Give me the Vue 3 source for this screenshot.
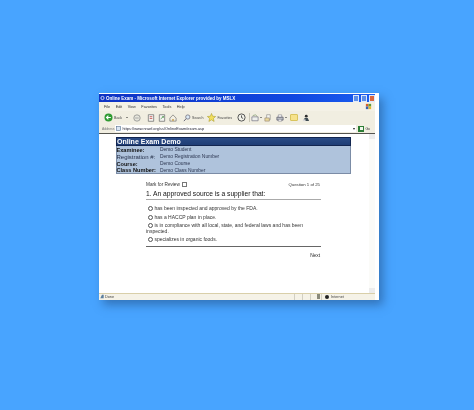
<template>
  <div class="page">
    <div class="window">
      <div class="titlebar">
        <svg class="ie" viewBox="0 0 8 8"><circle cx="4" cy="4" r="2.6" fill="none" stroke="#fff" stroke-width="1.2" /></svg>
        <span class="title">Online Exam - Microsoft Internet Explorer provided by MSLX</span>
        <div class="winbtns">
          <span class="winbtn"></span>
          <span class="winbtn"></span>
          <span class="winbtn close"></span>
        </div>
      </div>

      <div class="menubar">
        <span v-for="m in menus" :key="m">{{ m }}</span>
        <svg class="flag" viewBox="0 0 8 8">
          <rect x="1" y="1" width="3" height="3" fill="#d8612a" />
          <rect x="4" y="1" width="3" height="3" fill="#5a9a3a" />
          <rect x="1" y="4" width="3" height="3" fill="#3a62b0" />
          <rect x="4" y="4" width="3" height="3" fill="#e2b82e" />
        </svg>
      </div>

      <div class="toolbar">
        <svg class="tool wide" viewBox="0 0 9 9">
          <circle cx="4.5" cy="4.5" r="4" fill="#2f9a32" />
          <path d="M6.8 4.5H2.6M4.4 2.6 2.5 4.5l1.9 1.9" fill="none" stroke="#fff" stroke-width="1.1" />
        </svg>
        <span class="tool-text">Back</span>
        <span class="caret"></span>
        <svg class="tool fwd" viewBox="0 0 9 9">
          <circle cx="4.5" cy="4.5" r="3.6" fill="#e6e6dc" stroke="#777" stroke-width=".7" />
          <path d="M2.4 4.5h4" stroke="#999" stroke-width=".9" />
        </svg>
        <svg class="tool doc first" viewBox="0 0 9 9">
          <path d="M1.5 .8h6v7.4h-6z" fill="#f4f4f0" stroke="#555" stroke-width=".7" />
          <path d="M3 3h3M3 5h3" stroke="#b33" stroke-width=".8" />
        </svg>
        <svg class="tool doc" viewBox="0 0 9 9">
          <path d="M1.5 .8h6v7.4h-6z" fill="#f4f4f0" stroke="#555" stroke-width=".7" />
          <path d="M3 5.5 6 3M4.8 2.8H6.2V4.2" fill="none" stroke="#3a8a3a" stroke-width=".8" />
        </svg>
        <svg class="tool doc" viewBox="0 0 9 9">
          <path d="M1 4.6 4.5 1 8 4.6V8H1z" fill="#f3efe2" stroke="#666" stroke-width=".7" />
          <path d="M3.6 8V5.6h1.8V8" fill="#c9a45a" />
        </svg>
        <svg class="tool search" viewBox="0 0 9 9">
          <circle cx="5.4" cy="3.4" r="2.4" fill="#dbe9f5" stroke="#667" stroke-width=".8" />
          <path d="M3.6 5.2 1 8" stroke="#667" stroke-width="1.1" />
        </svg>
        <span class="tool-text">Search</span>
        <svg class="tool star" viewBox="0 0 10 10">
          <path d="M5 .5 6.3 3.6 9.6 3.9 7.1 6.1 7.9 9.4 5 7.6 2.1 9.4 2.9 6.1.4 3.9 3.7 3.6z" fill="#f3df5c" stroke="#a89a28" stroke-width=".6" />
        </svg>
        <span class="tool-text">Favorites</span>
        <svg class="tool hist" viewBox="0 0 9 9">
          <circle cx="4.5" cy="4.5" r="3.6" fill="#f2f2ea" stroke="#444" stroke-width=".9" />
          <path d="M4.5 2.4v2.2l1.6.8" fill="none" stroke="#333" stroke-width=".8" />
        </svg>
        <span class="sep"></span>
        <svg class="tool" viewBox="0 0 9 9">
          <path d="M1 3.2h7v4.4H1z" fill="#eef0ec" stroke="#667" stroke-width=".7" />
          <path d="M2 1.8 5 1l2 1.6" fill="none" stroke="#6a8a5a" stroke-width=".7" />
        </svg>
        <span class="caret small"></span>
        <svg class="tool mail" viewBox="0 0 9 9">
          <path d="M3 .8h4v5.6H3z" fill="#f6f6f0" stroke="#777" stroke-width=".6" />
          <path d="M1 4.4h5V8H1z" fill="#e9d99c" stroke="#876" stroke-width=".6" />
        </svg>
        <svg class="tool print" viewBox="0 0 9 9">
          <path d="M1 3.5h7v3.4H1z" fill="#bfc3c8" stroke="#445" stroke-width=".7" />
          <path d="M2.6 1h3.8v2.4H2.6zM2.6 6h3.8v2H2.6z" fill="#fff" stroke="#556" stroke-width=".5" />
        </svg>
        <span class="caret small"></span>
        <span class="note"></span>
        <svg class="tool msg" viewBox="0 0 9 9">
          <circle cx="4.8" cy="2.4" r="1.6" fill="#2e2e2e" />
          <path d="M1.2 8 3 4.6h3.4L8 8z" fill="#3d4a52" />
          <rect x="1" y="6" width="3" height="2" fill="#d9d9d9" />
        </svg>
      </div>

      <div class="addressbar">
        <span class="addr-label">Address</span>
        <div class="addr-field">
          <svg class="page-icon" viewBox="0 0 6 6">
            <rect x=".5" y=".5" width="5" height="5" fill="#dbe6f2" stroke="#56708f" stroke-width=".7" />
          </svg>
          <span class="url">https://www.nraef.org/ss/OnlineExam/exam.asp</span>
          <span class="addr-arrow"></span>
        </div>
        <span class="go-icon"><i></i></span>
        <span class="go-text">Go</span>
      </div>

      <div class="content">
        <div class="doc-body">
          <div class="exam-box">
            <div class="exam-title">Online Exam Demo</div>
            <div class="exam-info">
              <template v-for="r in examRows" :key="r.label">
                <span class="info-label" :class="{ thin: r.thin }">{{ r.label }}</span>
                <span class="info-value">{{ r.value }}</span>
              </template>
            </div>
          </div>

          <div class="question">
            <div class="q-head">
              <span class="mark">Mark for Review <i class="checkbox"></i></span>
              <span class="q-count">Question 1 of 25</span>
            </div>
            <div class="q-text">1. An approved source is a supplier that:</div>
            <div class="rule light"></div>
            <div class="answers">
              <div v-for="a in answers" :key="a" class="answer"><i class="radio"></i>{{ a }}</div>
            </div>
            <div class="rule dark"></div>
            <div class="next">Next</div>
          </div>
        </div>
        <div class="scrollbar">
          <span class="sb-btn"></span>
          <span class="sb-btn"></span>
        </div>
      </div>

      <div class="statusbar">
        <svg class="status-icon" viewBox="0 0 6 6">
          <path d="M.5 5.5 3 .5h2.5v5z" fill="#5d7f9e" />
        </svg>
        <span class="status-done">Done</span>
        <span class="pane"></span>
        <span class="pane"></span>
        <span class="pane lock"><i></i></span>
        <span class="pane zone"><i class="globe"></i>Internet</span>
      </div>
    </div>
  </div>
</template>

<script setup>
const menus = ['File', 'Edit', 'View', 'Favorites', 'Tools', 'Help']

const examRows = [
  { label: 'Examinee:', value: 'Demo Student' },
  { label: 'Registration #:', value: 'Demo Registration Number', thin: true },
  { label: 'Course:', value: 'Demo Course' },
  { label: 'Class Number:', value: 'Demo Class Number' }
]

const answers = [
  'has been inspected and approved by the FDA.',
  'has a HACCP plan in place.',
  'is in compliance with all local, state, and federal laws and has been inspected.',
  'specializes in organic foods.'
]
</script>

<style scoped>
.page {
  width: 474px;
  height: 410px;
  box-sizing: border-box;
  padding: 92.5px 0 0 99px;
  background: #48a4ff;
  font-family: "Liberation Sans", Arial, sans-serif;
  overflow: hidden;
}
.window {
  width: 280px;
  height: 207.5px;
  box-sizing: border-box;
  padding: 1.5px 4px 0 0;
  display: flex;
  flex-direction: column;
  background: #fff;
  box-shadow: 4px 5px 9px rgba(30, 70, 120, 0.5);
  filter: blur(0.45px);
}
.titlebar {
  height: 8px;
  display: flex;
  align-items: center;
  gap: 1px;
  padding: 0 0 0 1px;
  background: linear-gradient(90deg, #0f33c4, #1147e0 70%, #1a5ef0);
  color: #fff;
  font-size: 4.5px;
  font-weight: 700;
}
.ie { width: 5px; height: 6px; flex: none; }
.title { flex: 1; white-space: nowrap; }
.winbtns { display: flex; gap: 1.5px; }
.winbtn {
  width: 6.5px;
  height: 7px;
  background: #5d8fe8;
  border: 0.5px solid #dfe9fb;
  box-sizing: border-box;
}
.winbtn.close { background: #d9683f; }
.menubar {
  height: 9px;
  display: flex;
  align-items: center;
  gap: 5.5px;
  padding-left: 5px;
  font-size: 3.8px;
  color: #333;
  background: #f4f1e6;
}
.flag { width: 7px; height: 7px; margin-left: auto; margin-right: 3px; }
.toolbar {
  height: 13px;
  display: flex;
  align-items: center;
  padding-left: 5px;
  color: #444;
  font-size: 3.6px;
  background: #f1eee1;
}
.tool { width: 8px; height: 8px; flex: none; }
.tool.wide { width: 9px; height: 9px; }
.tool-text { margin-left: 1px; white-space: nowrap; }
.caret {
  width: 0;
  height: 0;
  margin: 0 5px 0 4px;
  border: 1.2px solid transparent;
  border-top: 1.6px solid #222;
  border-bottom: 0;
}
.caret.small { margin: 0 2px 0 1px; }
.fwd { margin-right: 4px; }
.doc { margin-left: 3px; }
.first { margin-left: 2px; }
.search { margin-left: 6px; }
.star { width: 9px; height: 9px; margin-left: 4px; }
.hist { margin-left: 5px; width: 9px; height: 9px; }
.sep { width: 0.5px; height: 9px; margin: 0 1.5px 0 3px; background: #c9c6b6; }
.mail { margin-left: 0; }
.print { margin-left: 4px; }
.note {
  width: 8px;
  height: 7px;
  border-radius: 1px;
  background: #f6e28b;
  border: 0.5px solid #d9c45e;
  box-sizing: border-box;
  margin-left: 1px;
}
.msg { margin-left: 4px; }
.addressbar {
  height: 9px;
  display: flex;
  align-items: center;
  padding: 0 5px 0 3px;
  font-size: 3.4px;
  color: #777;
  background: #f1eee1;
}
.addr-field {
  flex: 1;
  height: 7px;
  margin-left: 1px;
  display: flex;
  align-items: center;
  gap: 1px;
  padding-left: 1px;
  background: #fff;
}
.page-icon { width: 5px; height: 5px; }
.url { flex: 1; color: #223; font-size: 3.9px; white-space: nowrap; }
.addr-arrow {
  width: 0;
  height: 0;
  margin-right: 1px;
  border: 1.5px solid transparent;
  border-top: 2px solid #222;
  border-bottom: 0;
}
.go-icon {
  width: 6px;
  height: 6px;
  margin-left: 2px;
  background: #2c7d35;
  display: flex;
  align-items: center;
  justify-content: center;
}
.go-icon i { width: 3px; height: 3px; background: #eef6ea; }
.go-text { margin-left: 1px; color: #333; }
.content {
  flex: 1;
  display: flex;
  min-height: 0;
  border-top: 1px solid #55554f;
  background: #fff;
}
.doc-body { flex: 1; padding: 3px 0 0 16.5px; }
.exam-box { width: 235px; }
.exam-title {
  height: 9px;
  box-sizing: border-box;
  padding-left: 0.5px;
  border: 0.5px solid #12254f;
  background: linear-gradient(#2a4b86, #1f3d75);
  color: #fff;
  font-size: 7px;
  font-weight: 700;
  line-height: 8px;
}
.exam-info {
  display: grid;
  grid-template-columns: 43.5px 1fr;
  grid-auto-rows: 6.8px;
  align-items: center;
  height: 28px;
  box-sizing: border-box;
  padding-top: 0.6px;
  background: #afc3dc;
  border: 0.5px solid #7b8ca6;
  border-top: 0;
}
.info-label {
  color: #111;
  font-size: 5.6px;
  font-weight: 700;
  white-space: nowrap;
}
.info-label.thin { font-size: 6px; font-weight: 400; color: #27314a; }
.info-value { color: #2c3650; font-size: 4.9px; white-space: nowrap; }
.question { width: 175px; margin: 7px 0 0 30.5px; }
.q-head {
  display: flex;
  justify-content: space-between;
  align-items: center;
  height: 7px;
  font-size: 4.7px;
  color: #333;
  padding-right: 1px;
}
.q-count { font-size: 4.3px; }
.mark { display: flex; align-items: center; gap: 2px; }
.checkbox {
  width: 5px;
  height: 5px;
  box-sizing: border-box;
  border: 0.5px solid #777;
}
.q-text {
  margin-top: 2px;
  height: 7px;
  line-height: 7px;
  font-size: 6.7px;
  color: #111;
  white-space: nowrap;
}
.rule { margin-top: 2px; height: 0.6px; background: #aaa; }
.rule.dark { margin-top: 3.5px; height: 0.8px; background: #666; }
.answers { padding-top: 6.5px; }
.answer {
  font-size: 5px;
  line-height: 5.6px;
  color: #333;
  margin-bottom: 2.9px;
}
.radio {
  display: inline-block;
  width: 5px;
  height: 5px;
  box-sizing: border-box;
  margin: 0 1.5px 0 2px;
  border: 0.6px solid #555;
  border-radius: 50%;
  vertical-align: middle;
}
.next {
  margin-top: 6px;
  text-align: right;
  font-size: 4.8px;
  color: #222;
  padding-right: 1px;
}
.scrollbar {
  width: 6px;
  display: flex;
  flex-direction: column;
  justify-content: space-between;
  background: #fbfbf8;
}
.sb-btn { height: 5px; background: #ececec; }
.statusbar {
  height: 6.5px;
  display: flex;
  align-items: center;
  border-top: 1px solid #d9cfa9;
  font-size: 3.8px;
  color: #444;
  background: #f5f2e7;
}
.status-icon { width: 4px; height: 5px; margin-left: 1px; }
.status-done { margin-left: 1px; flex: 1; }
.pane {
  width: 8px;
  height: 100%;
  border-left: 0.5px solid #d2cfc2;
  box-sizing: border-box;
}
.pane.lock { width: 11px; display: flex; align-items: center; justify-content: flex-end; padding-right: 1px; }
.pane.lock i { width: 3px; height: 5px; background: #8a8a7c; }
.pane.zone {
  width: 54px;
  display: flex;
  align-items: center;
  gap: 2px;
  padding-left: 3px;
}
.globe { width: 4px; height: 4px; border-radius: 50%; background: #222; }
</style>

<style>
html, body { margin: 0; background: #48a4ff; }
</style>
